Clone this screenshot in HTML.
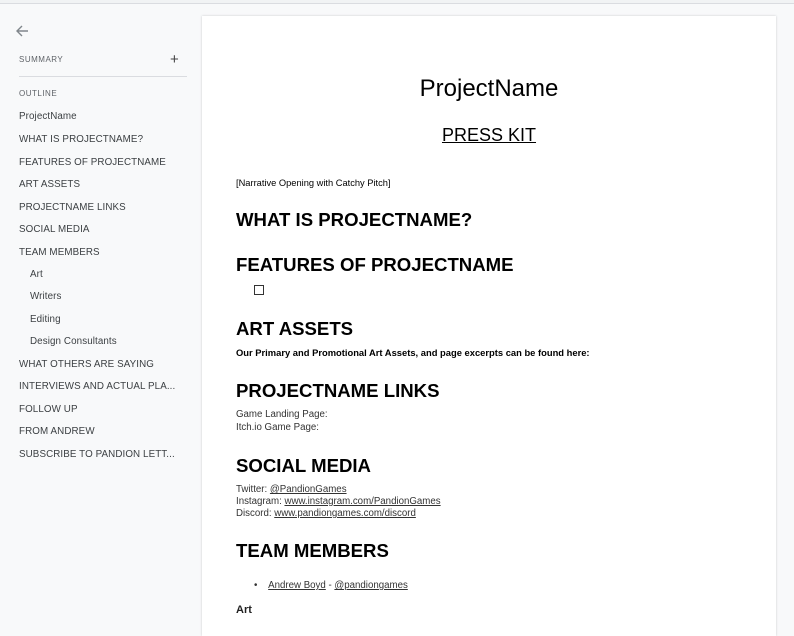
<!DOCTYPE html>
<html><head><style>
*{margin:0;padding:0;box-sizing:border-box}
body{width:794px;height:619px;background:#f8f9fa;position:relative;overflow:hidden;font-family:"Liberation Sans",Arial,sans-serif}
.top{position:absolute;left:0;top:0;width:794px;height:4px;background:#f1f3f4;border-bottom:1px solid #dadce0}
.page{position:absolute;left:202px;top:16px;width:574px;height:620px;background:#fff;box-shadow:0 0 2px rgba(60,64,67,.25)}
.a{position:absolute;white-space:nowrap}
.nav{font-size:9.8px;color:#3c4043;left:19px;letter-spacing:.1px}
.sub{left:30px}
.lab{font-size:8px;color:#5f6368;letter-spacing:.5px;left:19px}
.h{font-weight:bold;font-size:18.6px;color:#000;left:236px}
.t{font-size:9.7px;color:#000;left:236px}
u{text-decoration:underline}
</style></head><body>
<div class="top"></div>
<svg class="a" style="left:14px;top:24px" width="16" height="14" viewBox="0 0 16 14"><path d="M14 7H3M8 2L3 7l5 5" fill="none" stroke="#80868b" stroke-width="1.4"/></svg>
<div class="a lab" style="top:55px">SUMMARY</div>
<div class="a" style="left:170px;top:51px;font-size:15px;color:#444">+</div>
<div class="a" style="left:19px;top:76px;width:168px;height:1px;background:#dadce0"></div>
<div class="a lab" style="top:89px">OUTLINE</div>
<div class="a nav" style="top:111px">ProjectName</div>
<div class="a nav" style="top:134px">WHAT IS PROJECTNAME?</div>
<div class="a nav" style="top:157px">FEATURES OF PROJECTNAME</div>
<div class="a nav" style="top:179px">ART ASSETS</div>
<div class="a nav" style="top:202px">PROJECTNAME LINKS</div>
<div class="a nav" style="top:224px">SOCIAL MEDIA</div>
<div class="a nav" style="top:247px">TEAM MEMBERS</div>
<div class="a nav sub" style="top:269px">Art</div>
<div class="a nav sub" style="top:291px">Writers</div>
<div class="a nav sub" style="top:314px">Editing</div>
<div class="a nav sub" style="top:336px">Design Consultants</div>
<div class="a nav" style="top:359px">WHAT OTHERS ARE SAYING</div>
<div class="a nav" style="top:381px">INTERVIEWS AND ACTUAL PLA...</div>
<div class="a nav" style="top:404px">FOLLOW UP</div>
<div class="a nav" style="top:426px">FROM ANDREW</div>
<div class="a nav" style="top:449px">SUBSCRIBE TO PANDION LETT...</div>
<div class="page"></div>
<div class="a" style="left:202px;width:574px;text-align:center;top:75px;font-size:24px">ProjectName</div>
<div class="a" style="left:202px;width:574px;text-align:center;top:125px;font-size:18px"><u>PRESS KIT</u></div>
<div class="a t" style="top:178px;font-size:9.3px">[Narrative Opening with Catchy Pitch]</div>
<div class="a h" style="top:209px">WHAT IS PROJECTNAME?</div>
<div class="a h" style="top:254px">FEATURES OF PROJECTNAME</div>
<div class="a" style="left:254px;top:285px;width:10px;height:10px;border:1px solid #333"></div>
<div class="a h" style="top:318px">ART ASSETS</div>
<div class="a t" style="top:347px;font-weight:bold;font-size:9.4px">Our Primary and Promotional Art Assets, and page excerpts can be found here:</div>
<div class="a h" style="top:380px">PROJECTNAME LINKS</div>
<div class="a t" style="top:409px;color:#333">Game Landing Page:</div>
<div class="a t" style="top:422px;color:#333">Itch.io Game Page:</div>
<div class="a h" style="top:455px">SOCIAL MEDIA</div>
<div class="a t" style="top:484px;color:#333">Twitter: <u>@PandionGames</u></div>
<div class="a t" style="top:496px;color:#333">Instagram: <u>www.instagram.com/PandionGames</u></div>
<div class="a t" style="top:508px;color:#333">Discord: <u>www.pandiongames.com/discord</u></div>
<div class="a h" style="top:540px">TEAM MEMBERS</div>
<div class="a t" style="left:254px;top:580px;color:#333">•&nbsp;&nbsp;&nbsp;&nbsp;<u>Andrew Boyd</u> - <u>@pandiongames</u></div>
<div class="a t" style="top:604px;font-weight:bold;font-size:11px;color:#222">Art</div>
</body></html>
